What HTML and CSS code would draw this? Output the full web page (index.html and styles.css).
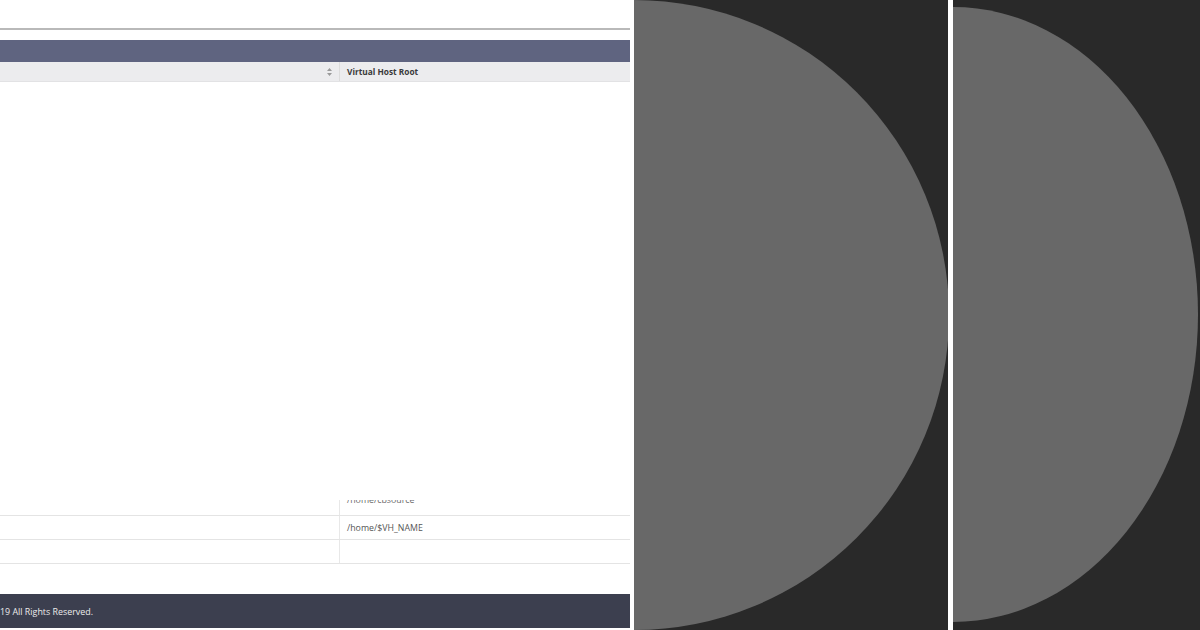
FILE: index.html
```html
<!DOCTYPE html>
<html lang="en">
<head>
<meta charset="utf-8">
<title>Virtual Hosts</title>
<link rel="stylesheet" href="styles.css">
</head>
<body>
<div class="screen">
  <div class="app">
    <div class="topbar"></div>
    <div class="panel">
      <div class="panel-heading"></div>
      <div class="table">
        <div class="thead">
          <div class="th th-first"><span class="sort"><svg width="5" height="8" viewBox="0 0 5 8"><path d="M2.5 0 L5 3 L0 3 Z M2.5 8 L5 5 L0 5 Z" fill="#9a9a9a"/></svg></span></div>
          <div class="th th-second">Virtual Host Root</div>
        </div>
        <div class="tbody-hidden"></div>
        <div class="row row-clipped">
          <div class="td"></div>
          <div class="td td-second"><span class="clip-text">/home/cbsource</span></div>
        </div>
        <div class="row">
          <div class="td"></div>
          <div class="td td-second">/home/$VH_NAME</div>
        </div>
        <div class="row">
          <div class="td"></div>
          <div class="td td-second"></div>
        </div>
      </div>
    </div>
    <div class="footer">19 All Rights Reserved.</div>
  </div>
  <div class="dark dark-one">
    <svg width="314" height="630" viewBox="0 0 314 630"><circle cx="0" cy="315" r="315" fill="#686868"/></svg>
  </div>
  <div class="dark dark-two">
    <svg width="247" height="630" viewBox="0 0 247 630"><ellipse cx="0" cy="314.5" rx="245" ry="307.5" fill="#686868"/></svg>
  </div>
</div>
</body>
</html>
```
FILE: styles.css
```css
html, body {
  margin: 0;
  padding: 0;
  background: #ffffff;
}

body {
  font-family: "Open Sans", "Liberation Sans", sans-serif;
  width: 1200px;
  height: 630px;
  overflow: hidden;
}

.screen {
  display: flex;
  width: 1200px;
  height: 630px;
}

.app {
  width: 630px;
  height: 630px;
  display: flex;
  flex-direction: column;
  flex: none;
  background: #ffffff;
}

.topbar {
  height: 28px;
  border-bottom: 2px solid #b9b9b9;
  flex: none;
}

.panel {
  margin-top: 10px;
  flex: none;
}

.panel-heading {
  height: 22px;
  background: #5f6480;
}

.table {
  display: flex;
  flex-direction: column;
}

.thead {
  display: flex;
  height: 19px;
  background: #ececee;
  border-bottom: 1px solid #e2e2e4;
}

.th {
  display: flex;
  align-items: center;
  font-size: 8.3px;
  font-weight: 700;
  color: #3a3a3a;
}

.th-first {
  width: 340px;
  justify-content: flex-end;
  border-right: 1px solid #dcdcdc;
  box-sizing: border-box;
}

.sort {
  display: flex;
  margin-right: 7px;
}

.th-second {
  padding-left: 7px;
}

.tbody-hidden {
  height: 418px;
  background: #ffffff;
}

.row {
  display: flex;
  height: 23px;
  border-bottom: 1px solid #e4e4e4;
}

.row-clipped {
  height: 15px;
  overflow: hidden;
}

.td {
  width: 340px;
  box-sizing: border-box;
  border-right: 1px solid #e8e8e8;
  flex: none;
}

.td-second {
  flex: 1;
  border-right: none;
  padding-left: 7px;
  display: flex;
  align-items: center;
  font-size: 8.8px;
  color: #555555;
}

.row-clipped .td-second {
  align-items: flex-start;
}

.clip-text {
  display: block;
  margin-top: -6px;
  line-height: 12px;
  color: #6a6a6a;
}

.footer {
  margin-top: 30px;
  height: 34px;
  background: #3c3f4f;
  color: #ececec;
  font-size: 8.9px;
  display: flex;
  align-items: center;
  flex: none;
}

.dark {
  background: #292929;
  height: 630px;
  flex: none;
  overflow: hidden;
}

.dark svg {
  display: block;
}

.dark-one {
  width: 314px;
  margin-left: 4px;
}

.dark-two {
  width: 247px;
  margin-left: 5px;
}
```
